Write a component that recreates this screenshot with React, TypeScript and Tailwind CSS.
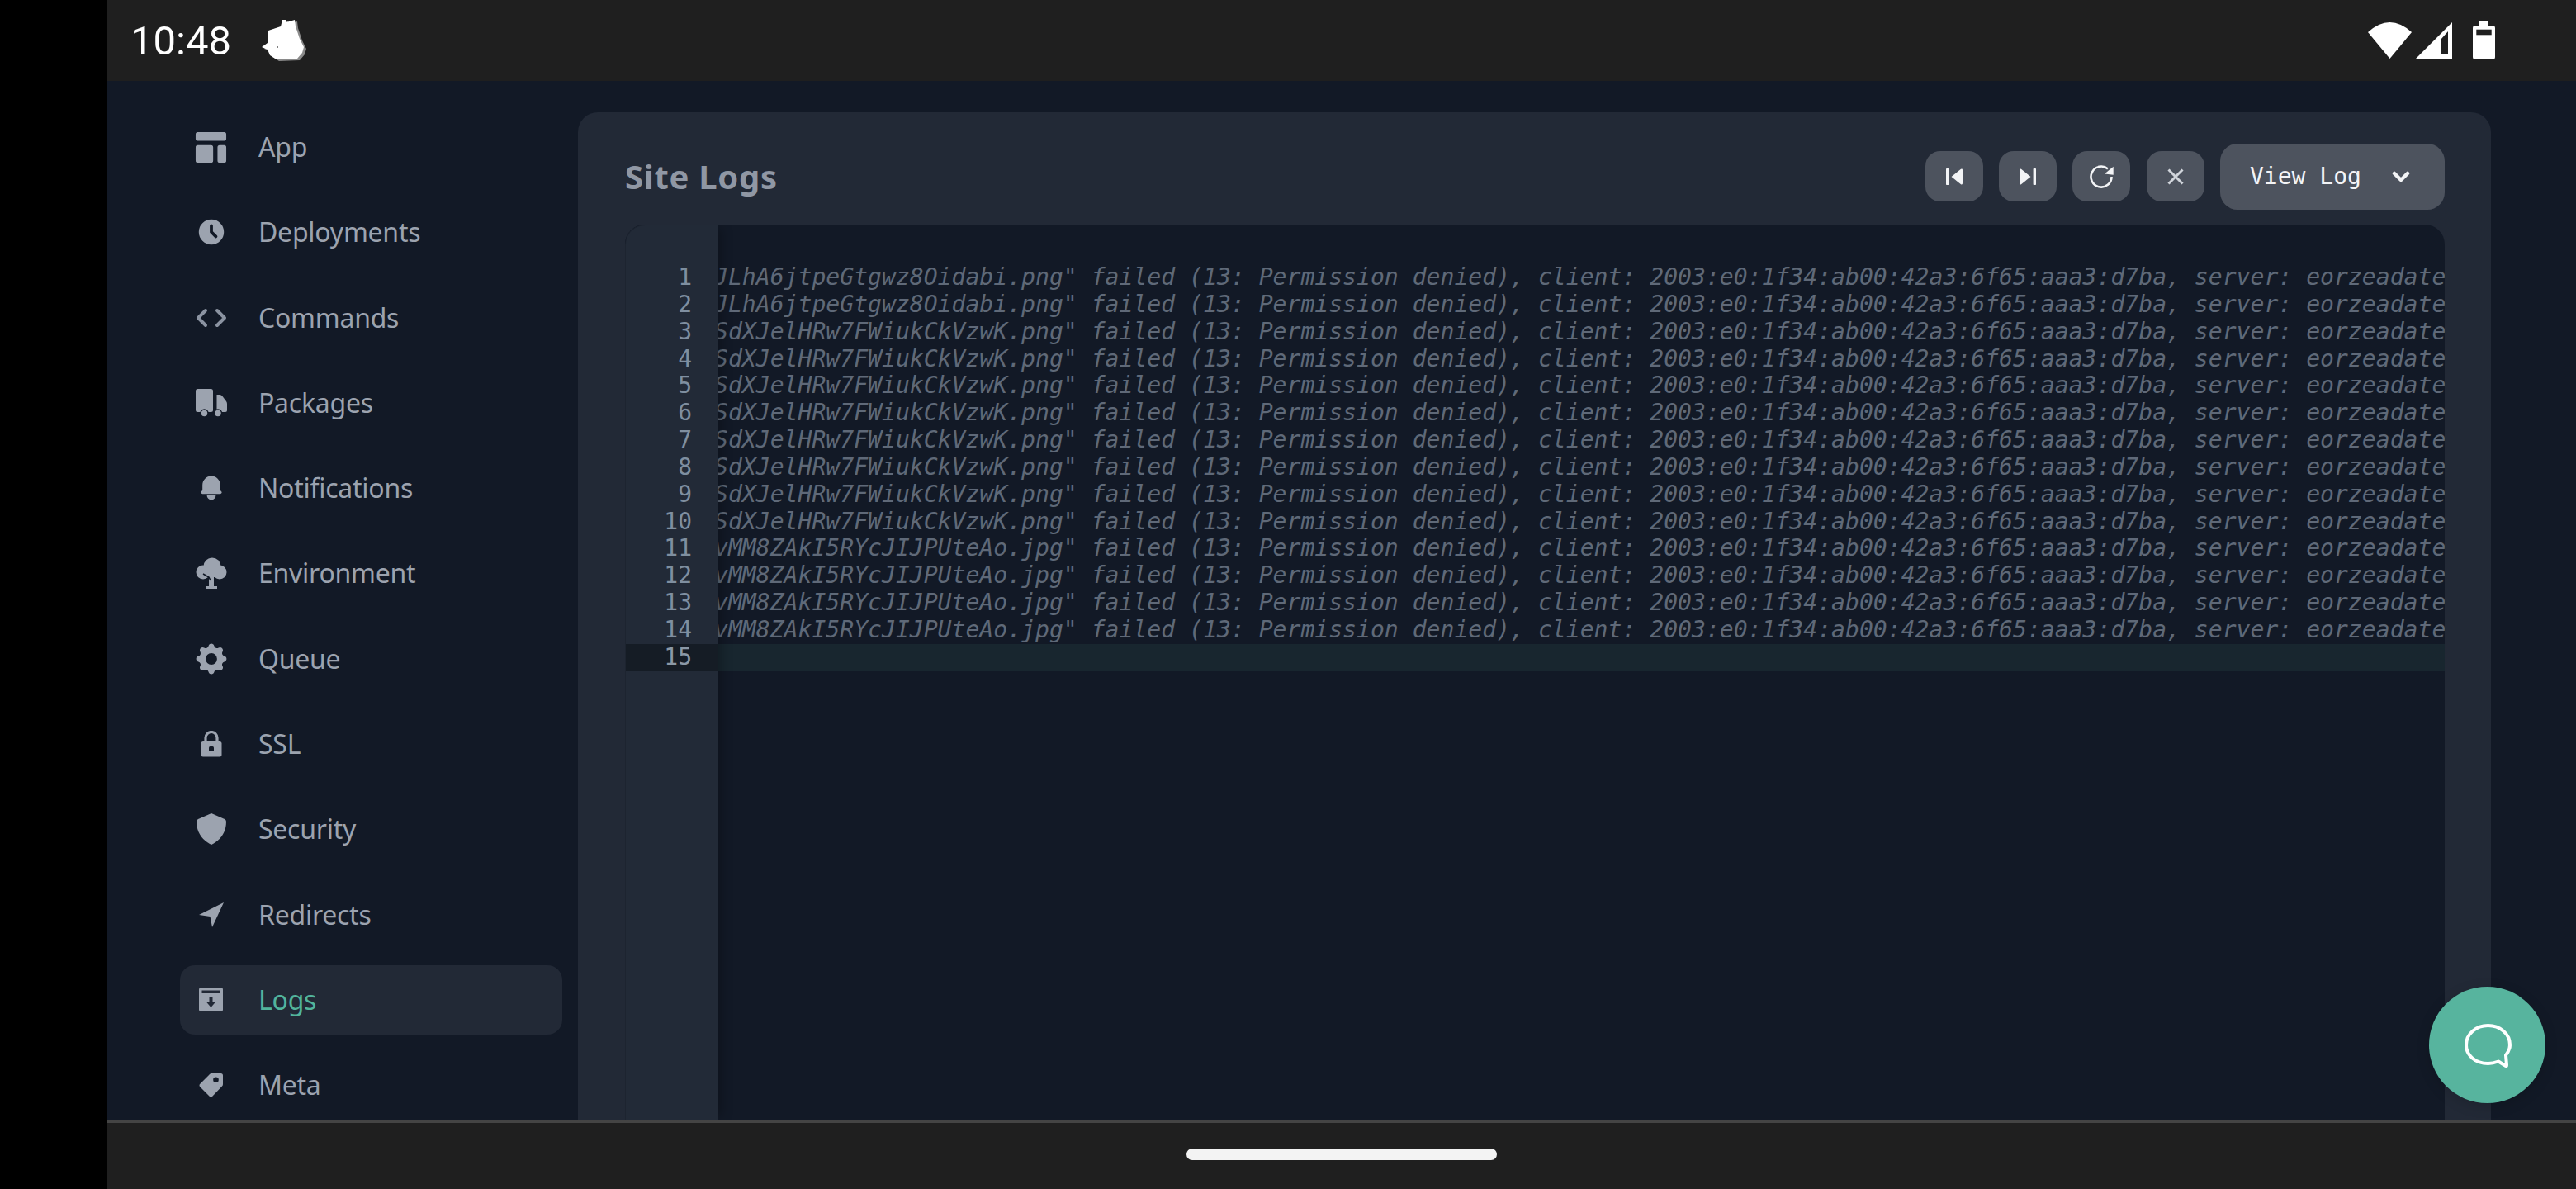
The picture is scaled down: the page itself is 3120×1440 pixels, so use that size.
import { HiTemplate, HiClock, HiBell, HiCog } from 'react-icons/hi';
import type { ReactNode } from 'react';

const FILE_TAIL = '" failed (13: Permission denied), client: 2003:e0:1f34:ab00:42a3:6f65:aaa3:d7ba, server: eorzeadate';

const LOG_NAMES = [
  'JLhA6jtpeGtgwz8Oidabi.png',
  'JLhA6jtpeGtgwz8Oidabi.png',
  'SdXJelHRw7FWiukCkVzwK.png',
  'SdXJelHRw7FWiukCkVzwK.png',
  'SdXJelHRw7FWiukCkVzwK.png',
  'SdXJelHRw7FWiukCkVzwK.png',
  'SdXJelHRw7FWiukCkVzwK.png',
  'SdXJelHRw7FWiukCkVzwK.png',
  'SdXJelHRw7FWiukCkVzwK.png',
  'SdXJelHRw7FWiukCkVzwK.png',
  'vMM8ZAkI5RYcJIJPUteAo.jpg',
  'vMM8ZAkI5RYcJIJPUteAo.jpg',
  'vMM8ZAkI5RYcJIJPUteAo.jpg',
  'vMM8ZAkI5RYcJIJPUteAo.jpg',
];

function CodeIcon() {
  return (
    <svg width="38" height="24" viewBox="0 0 38 24" fill="none" stroke="#8b93a1" strokeWidth="4" strokeLinecap="round" strokeLinejoin="round">
      <path d="M12 3 L3 12 L12 21" />
      <path d="M26 3 L35 12 L26 21" />
    </svg>
  );
}

function TruckIcon() {
  return (
    <svg width="38" height="34" viewBox="0 0 38 34" fill="#9ca3af">
      <rect x="0" y="0" width="21" height="28" rx="2.5" />
      <path d="M25.5 7 H29 Q31 7 32.5 9 L37 15 Q38 16.5 38 18 V26 Q38 28 36 28 H27 Q25.5 28 25.5 26 Z" />
      <circle cx="10.5" cy="29.5" r="4.5" stroke="#121926" strokeWidth="1.5" />
      <circle cx="27" cy="29.5" r="4.5" stroke="#121926" strokeWidth="1.5" />
    </svg>
  );
}

function TreeIcon() {
  return (
    <svg width="38" height="38" viewBox="0 0 38 38" fill="#9ca3af">
      <circle cx="20" cy="11" r="10.5" />
      <circle cx="9" cy="18" r="8.5" />
      <circle cx="29" cy="18" r="8.5" />
      <rect x="10" y="12" width="18" height="12" />
      <path d="M16 24 H22 V35 H26 V38 H12 V35 H16 Z" />
      <path d="M9 20 L16 24 L18 28" fill="none" stroke="#121926" strokeWidth="1.6" />
    </svg>
  );
}

function LockIcon() {
  return (
    <svg width="26" height="32" viewBox="0 0 26 32" fill="#9ca3af">
      <path d="M6 14 V8.5 A7 7 0 0 1 20 8.5 V14" fill="none" stroke="#9ca3af" strokeWidth="3.2" />
      <rect x="0.5" y="13" width="25" height="18.5" rx="2.5" />
      <rect x="10" y="19" width="6" height="6" rx="1.5" fill="#121926" />
    </svg>
  );
}

function ShieldIcon() {
  return (
    <svg width="36" height="38" viewBox="0 0 36 38" fill="#9ca3af">
      <path d="M18 0 L34 7 Q36 8 36 10 C36 22 30 32 18 38 C6 32 0 22 0 10 Q0 8 2 7 Z" />
    </svg>
  );
}

function ArrowIcon() {
  return (
    <svg width="30" height="30" viewBox="0 0 30 30" fill="#9ca3af">
      <path d="M30 0 L0 15 L13.5 17 L16 30 Z" />
    </svg>
  );
}

function ArchiveIcon() {
  return (
    <svg width="29" height="29" viewBox="0 0 29 29">
      <rect width="29" height="29" rx="2.5" fill="#9ca3af" />
      <rect x="3.5" y="3.5" width="22" height="3.5" fill="#222936" />
      <path d="M12.5 11 H16.5 V17 H20.5 L14.5 24 L8.5 17 H12.5 Z" fill="#222936" />
    </svg>
  );
}

function TagIcon() {
  return (
    <svg width="29" height="29" viewBox="0 0 29 29" fill="#9ca3af">
      <path
        fillRule="evenodd"
        d="M15 0 H26.5 Q29 0 29 2.5 V13 Q29 14.5 28 15.5 L16 28 Q14.5 29 13 28 L1 16 Q0 14.5 1 13 L13 1 Q14 0 15 0 Z M20.5 4.5 A3.3 3.3 0 1 0 20.5 11.1 A3.3 3.3 0 1 0 20.5 4.5 Z"
      />
    </svg>
  );
}

const NAV_ITEMS: { label: string; icon: ReactNode; active?: boolean }[] = [
  { label: 'App', icon: <HiTemplate className="w-[53px] h-[53px] text-[#9ca3af]" /> },
  { label: 'Deployments', icon: <HiClock className="w-[38px] h-[38px] text-[#9ca3af]" /> },
  { label: 'Commands', icon: <CodeIcon /> },
  { label: 'Packages', icon: <TruckIcon /> },
  { label: 'Notifications', icon: <HiBell className="w-[36px] h-[36px] text-[#9ca3af]" /> },
  { label: 'Environment', icon: <TreeIcon /> },
  { label: 'Queue', icon: <HiCog className="w-[46px] h-[46px] text-[#9ca3af]" /> },
  { label: 'SSL', icon: <LockIcon /> },
  { label: 'Security', icon: <ShieldIcon /> },
  { label: 'Redirects', icon: <ArrowIcon /> },
  { label: 'Logs', icon: <ArchiveIcon />, active: true },
  { label: 'Meta', icon: <TagIcon /> },
];

function StatusBar() {
  return (
    <div className="h-[98px] shrink-0 bg-[#1f1f1f] flex items-center justify-between pl-[28px] pr-[98px]">
      <div className="flex items-center">
        <span className="text-[49px] leading-none text-white font-['Roboto',sans-serif]">10:48</span>
        <svg width="58" height="52" viewBox="0 0 58 52" className="ml-[37px]">
          <path
            d="M25 1 H29 L30 4 L40 1 L41 9 L46 24 L51 34 L49 41 L43 48 L18 49 L10 44 L7 37 L0 34 L7 29 L8 14 L23 9 Z"
            fill="#8a8a8a"
            transform="translate(3 2)"
          />
          <path d="M25 1 H29 L30 4 L40 1 L41 9 L46 24 L51 34 L49 41 L43 48 L18 49 L10 44 L7 37 L0 34 L7 29 L8 14 L23 9 Z" fill="#ffffff" />
          <circle cx="19" cy="34" r="1" fill="#555" />
        </svg>
      </div>
      <div className="flex items-center">
        <svg width="53" height="44" viewBox="0 0 53 44" fill="#ffffff">
          <path d="M0 12 Q26.5 -12 53 12 L26.5 44 Z" />
        </svg>
        <svg width="44" height="44" viewBox="0 0 44 44" className="ml-[5px]">
          <path d="M0 44 L44 0 V44 Z" fill="#ffffff" />
          <path d="M30.7 20.3 L39 11 V38.7 H30.7 Z" fill="#1f1f1f" />
        </svg>
        <svg width="27" height="46" viewBox="0 0 27 46" className="ml-[25px]">
          <path d="M8 0 H19 V5 H24 Q27 5 27 8 V43 Q27 46 24 46 H3 Q0 46 0 43 V8 Q0 5 3 5 H8 Z" fill="#ffffff" />
          <rect x="4.3" y="9.7" width="18.4" height="6.6" fill="#1f1f1f" />
        </svg>
      </div>
    </div>
  );
}

function Sidebar() {
  return (
    <nav className="w-[570px] shrink-0 pt-[38px] pl-[88px] pr-[19px] flex flex-col gap-[19.3px]">
      {NAV_ITEMS.map((item) => (
        <div
          key={item.label}
          className={`h-[84px] shrink-0 flex items-center pl-[11px] rounded-[18px] ${item.active ? 'bg-[#222936]' : ''}`}
        >
          <div className="w-[53px] flex justify-center items-center shrink-0">{item.icon}</div>
          <span
            className={`ml-[31px] text-[32px] tracking-[-0.25px] font-['Noto_Sans',sans-serif] ${item.active ? 'text-[#52b49c]' : 'text-[#9ca3af]'}`}
          >
            {item.label}
          </span>
        </div>
      ))}
    </nav>
  );
}

function ToolButton({ children }: { children: ReactNode }) {
  return <button className="w-[70px] h-[61px] rounded-[18px] bg-[#4d535e] flex items-center justify-center">{children}</button>;
}

function PanelHeader() {
  return (
    <div className="h-[136px] shrink-0 flex items-center justify-between pt-[19px] pl-[57px] pr-[56px]">
      <h1 className="text-[40px] tracking-[0.7px] font-bold text-[#9097a4] font-['Noto_Sans',sans-serif]">Site Logs</h1>
      <div className="flex items-center gap-[19.3px]">
        <ToolButton>
          <svg width="20" height="20" viewBox="0 0 20 20" fill="#f3f4f6">
            <rect x="0" y="0" width="3.4" height="20" rx="0.8" />
            <path d="M6.5 10 L18 0.8 Q20 0 20 2 V18 Q20 20 18 19.2 Z" />
          </svg>
        </ToolButton>
        <ToolButton>
          <svg width="20" height="20" viewBox="0 0 20 20" fill="#f3f4f6">
            <rect x="16.6" y="0" width="3.4" height="20" rx="0.8" />
            <path d="M13.5 10 L2 0.8 Q0 0 0 2 V18 Q0 20 2 19.2 Z" />
          </svg>
        </ToolButton>
        <ToolButton>
          <svg width="32" height="32" viewBox="0 0 32 32" fill="none">
            <path d="M24 6.5 A12.5 12.5 0 1 0 28.5 16" stroke="#f3f4f6" strokeWidth="2.6" />
            <path d="M30.7 3.7 V13.7 L20 12.5 Z" fill="#f3f4f6" />
          </svg>
        </ToolButton>
        <ToolButton>
          <svg width="20" height="20" viewBox="0 0 20 20" fill="none" stroke="#d1d5db" strokeWidth="3">
            <path d="M1.5 1.5 L18.5 18.5 M18.5 1.5 L1.5 18.5" />
          </svg>
        </ToolButton>
        <button className="w-[272px] h-[80px] rounded-[21px] bg-[#4d535e] flex items-center pl-[36px] font-['DejaVu_Sans_Mono',monospace] text-[28px] text-[#f3f4f6]">
          <span className="whitespace-pre">View Log</span>
          <svg width="22" height="14" viewBox="0 0 22 14" fill="none" stroke="#f3f4f6" strokeWidth="4.5" strokeLinecap="round" strokeLinejoin="round" className="ml-[37px]">
            <path d="M3 3 L11 11 L19 3" />
          </svg>
        </button>
      </div>
    </div>
  );
}

function LogEditor() {
  return (
    <div className="flex-1 min-h-0 mr-[56px] ml-[57px] flex bg-[#121926] rounded-t-[24px] overflow-hidden font-['DejaVu_Sans_Mono',monospace] text-[28px] leading-[32.85px]">
      <div className="w-[113px] shrink-0 bg-[#222a37] border-l border-t border-[#1d2430] rounded-tl-[24px] pt-[47px] relative z-10 shadow-[8px_0_14px_-4px_rgba(0,0,0,0.25)] text-[#7f8fa0]">
        {LOG_NAMES.map((_, i) => (
          <div key={i} className="h-[32.85px] text-right pr-[32px]">
            {i + 1}
          </div>
        ))}
        <div className="h-[32.85px] text-right pr-[32px] bg-[#151c25] text-[#8b98a6]">15</div>
      </div>
      <div className="flex-1 min-w-0 pt-[48px] overflow-hidden">
        {LOG_NAMES.map((name, i) => (
          <div key={i} className="h-[32.85px] whitespace-pre italic text-[28.1px] -ml-[5px] text-[#5f6978]">
            {name + FILE_TAIL}
          </div>
        ))}
        <div className="h-[32.85px] bg-[#18262f]" />
      </div>
    </div>
  );
}

export default function App() {
  return (
    <div className="w-[3120px] h-[1440px] flex bg-black overflow-hidden relative">
      <div className="w-[130px] shrink-0 bg-black" />
      <div className="flex-1 min-w-0 flex flex-col">
        <StatusBar />
        <main className="flex-1 min-h-0 flex bg-[#121926] overflow-hidden">
          <Sidebar />
          <section className="w-[2317px] shrink-0 mt-[38px] bg-[#222936] rounded-t-[24px] flex flex-col">
            <PanelHeader />
            <LogEditor />
          </section>
        </main>
        <div className="h-[84px] shrink-0 bg-[#1f1f1f] border-t-4 border-[#444444] flex items-center justify-center pb-[4px]">
          <div className="w-[376px] h-[14px] rounded-full bg-[#f3f3f3]" />
        </div>
      </div>
      {/* Chat launcher */}
      <button className="absolute left-[2942px] top-[1195px] w-[141px] h-[141px] rounded-full bg-[#57b49e] flex items-center justify-center shadow-[0_4px_16px_rgba(0,0,0,0.15)]">
        <svg width="60" height="56" viewBox="0 0 60 56" fill="none" stroke="#ffffff" strokeWidth="4" strokeLinejoin="round">
          <path d="M52 40 C55 36 57 32 57 27.5 C57 14 45 4 30.5 4 C16 4 4 14 4 27.5 C4 40 15 50 30.5 50 C35 50 39 49 43 47.5 L52 53 Q53 53.5 53 52 L52 40 Z" />
        </svg>
      </button>
    </div>
  );
}
